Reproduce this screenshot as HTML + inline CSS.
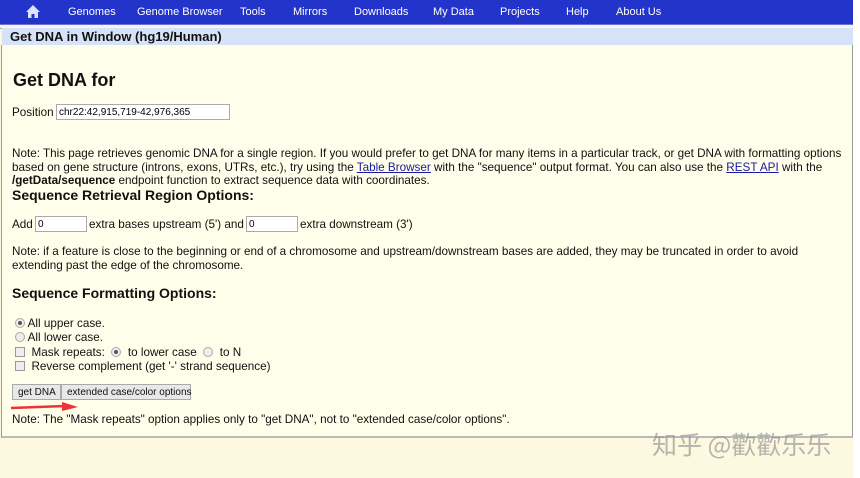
<!DOCTYPE html>
<html><head><meta charset="utf-8"><style>
body{margin:0;width:860px;height:478px;overflow:hidden;background:#fdf9e0;font-family:"Liberation Sans",Arial,sans-serif;font-size:11.7px;color:#111;position:relative}
.nav{position:absolute;left:0;top:0;width:853px;height:24px;background:#2234c9;border-bottom:1px solid #6a74d0}
.nav span{position:absolute;top:6px;color:#fff;font-size:11px}
.gap{position:absolute;left:0;top:25px;width:853px;height:3px;background:#f4f4f4;border-bottom:1px solid #aaa}
.hdr{position:absolute;left:2px;top:28px;width:851px;height:17px;background:#d6e2f7}
.hdr b{position:absolute;left:8px;top:1px;font-size:13px}
.panel{position:absolute;left:1px;top:45px;width:850px;height:391px;background:#fffeea;border-left:1px solid #999;border-right:1px solid #999;border-bottom:2px solid #bbb}
.t{position:absolute;left:12px;white-space:nowrap}
h1{position:absolute;left:13px;top:70px;margin:0;font-size:18px}
h2{position:absolute;left:12px;margin:0;font-size:14px}
input.tx{position:absolute;height:14px;border:1px solid #aaa;font-size:10px;padding:0 2px;background:#fff;font-family:inherit}
a{color:#1a1aa0}
.rb{display:inline-block;width:8px;height:8px;border:1px solid #aaa;border-radius:50%;background:#eee;vertical-align:-1px;position:relative}
.rb.on:after{content:"";position:absolute;left:2px;top:2px;width:4px;height:4px;border-radius:50%;background:#555}
.cb{display:inline-block;width:8px;height:8px;border:1px solid #999;background:#eee;vertical-align:-1px}
.btn{position:absolute;top:384px;height:15px;background:#e8e8e8;border:1px solid #aaa;font-size:10px;line-height:15px;padding:0 5px;white-space:nowrap;box-sizing:border-box;height:16px}
.side{position:absolute;left:853px;top:0;width:7px;height:478px;background:#fff}
</style></head><body>
<div class="nav">
<svg style="position:absolute;left:25px;top:4px" width="16" height="15" viewBox="0 0 16 15"><path d="M1 8 8 1l7 7h-2v6H9.5V10h-3v4H3V8z" fill="#dde3ff"/></svg>
<span style="left:68px">Genomes</span><span style="left:137px">Genome Browser</span><span style="left:240px">Tools</span><span style="left:293px">Mirrors</span><span style="left:354px">Downloads</span><span style="left:433px">My Data</span><span style="left:500px">Projects</span><span style="left:566px">Help</span><span style="left:616px">About Us</span>
</div>
<div class="gap"></div>
<div class="hdr"><b>Get DNA in Window (hg19/Human)</b></div>
<div class="panel"></div>
<h1>Get DNA for</h1>
<div class="t" style="top:106px">Position</div>
<input class="tx" style="left:56px;top:104px;width:168px" value="chr22:42,915,719-42,976,365">
<div class="t" style="top:147px;line-height:13.5px">Note: This page retrieves genomic DNA for a single region. If you would prefer to get DNA for many items in a particular track, or get DNA with formatting options<br>based on gene structure (introns, exons, UTRs, etc.), try using the <a href="#">Table Browser</a> with the "sequence" output format. You can also use the <a href="#">REST API</a> with the<br><b>/getData/sequence</b> endpoint function to extract sequence data with coordinates.</div>
<h2 style="top:187px">Sequence Retrieval Region Options:</h2>
<div class="t" style="top:218px">Add</div>
<input class="tx" style="left:35px;top:216px;width:46px" value="0">
<div class="t" style="left:89px;top:218px">extra bases upstream (5') and</div>
<input class="tx" style="left:246px;top:216px;width:46px" value="0">
<div class="t" style="left:300px;top:218px">extra downstream (3')</div>
<div class="t" style="top:245px;line-height:14px">Note: if a feature is close to the beginning or end of a chromosome and upstream/downstream bases are added, they may be truncated in order to avoid<br>extending past the edge of the chromosome.</div>
<h2 style="top:285px">Sequence Formatting Options:</h2>
<div class="t" style="left:15px;top:317px"><span class="rb on"></span> All upper case.</div>
<div class="t" style="left:15px;top:331px"><span class="rb"></span> All lower case.</div>
<div class="t" style="left:15px;top:346px"><span class="cb"></span>&nbsp; Mask repeats: &nbsp;<span class="rb on"></span>&nbsp; to lower case &nbsp;<span class="rb"></span>&nbsp; to N</div>
<div class="t" style="left:15px;top:360px"><span class="cb"></span>&nbsp; Reverse complement (get '-' strand sequence)</div>
<div class="btn" style="left:12px;width:49px">get DNA</div>
<div class="btn" style="left:61px;width:130px">extended case/color options</div>
<svg style="position:absolute;left:10px;top:401px" width="70" height="12"><path d="M1 7 L55 5" stroke="#e33" stroke-width="2.5"/><path d="M52 1 L68 6 L52 10z" fill="#e33"/></svg>
<div class="t" style="top:413px">Note: The "Mask repeats" option applies only to "get DNA", not to "extended case/color options".</div>
<div class="t" style="left:652px;top:426px;font-family:'Noto Sans CJK SC',sans-serif;font-size:25px;color:rgba(150,150,150,0.7)">知乎 @歡歡乐乐</div>
<div class="side"></div>
</body></html>
